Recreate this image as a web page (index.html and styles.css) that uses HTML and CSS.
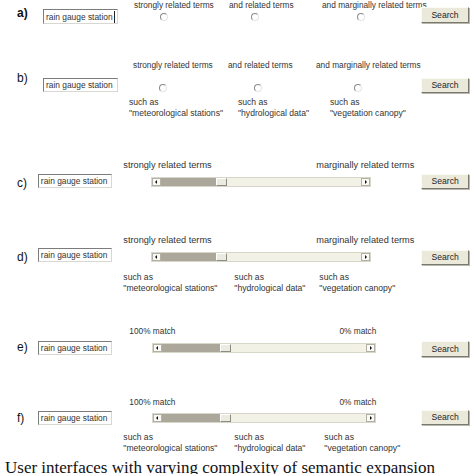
FILE: index.html
```html
<!DOCTYPE html>
<html>
<head>
<meta charset="utf-8">
<link rel="stylesheet" href="styles.css">
</head>
<body>
<div class="page">

  <section class="row ra">
    <div class="lbl lbl-ab bold">a)</div>
    <div class="inp inp-a"><span class="val">rain gauge station</span><span class="caret"></span></div>
    <div class="mid mid-ab mid-a">
      <div class="g3 heads-a">
        <div class="head">strongly related terms</div>
        <div class="head">and related terms</div>
        <div class="head">and marginally related terms</div>
      </div>
      <div class="g3 heads-a radios-a">
        <span class="radio ra1"></span>
        <span class="radio ra2"></span>
        <span class="radio ra3"></span>
      </div>
    </div>
    <button class="btn btn-a">Search</button>
  </section>

  <section class="row rb">
    <div class="lbl lbl-ab">b)</div>
    <div class="inp inp-b"><span class="val">rain gauge station</span></div>
    <div class="mid mid-ab mid-b">
      <div class="g3 heads-b">
        <div class="head">strongly related terms</div>
        <div class="head">and related terms</div>
        <div class="head">and marginally related terms</div>
      </div>
      <div class="g3 heads-b radios-b">
        <span class="radio rb1"></span>
        <span class="radio rb2"></span>
        <span class="radio rb3"></span>
      </div>
      <div class="g3 such such-b">
        <div>such as<br>"meteorological stations"</div>
        <div>such as<br>"hydrological data"</div>
        <div>such as<br>"vegetation canopy"</div>
      </div>
    </div>
    <button class="btn btn-b">Search</button>
  </section>

  <section class="row rc">
    <div class="lbl lbl-cf">c)</div>
    <div class="inp inp-c"><span class="val">rain gauge station</span></div>
    <div class="mid mid-cf">
      <div class="hrow hrow-cd">
        <span>strongly related terms</span>
        <span>marginally related terms</span>
      </div>
      <div class="slider slider-cd">
        <span class="arrow left"></span>
        <span class="fill fill-cd"></span>
        <span class="thumb"></span>
        <span class="track"></span>
        <span class="arrow right"></span>
      </div>
    </div>
    <button class="btn btn-c">Search</button>
  </section>

  <section class="row rd">
    <div class="lbl lbl-cf">d)</div>
    <div class="inp inp-d"><span class="val">rain gauge station</span></div>
    <div class="mid mid-cf">
      <div class="hrow hrow-cd">
        <span>strongly related terms</span>
        <span>marginally related terms</span>
      </div>
      <div class="slider slider-cd">
        <span class="arrow left"></span>
        <span class="fill fill-cd"></span>
        <span class="thumb"></span>
        <span class="track"></span>
        <span class="arrow right"></span>
      </div>
      <div class="g3 such such-d">
        <div>such as<br>"meteorological stations"</div>
        <div>such as<br>"hydrological data"</div>
        <div>such as<br>"vegetation canopy"</div>
      </div>
    </div>
    <button class="btn btn-d">Search</button>
  </section>

  <section class="row re">
    <div class="lbl lbl-cf">e)</div>
    <div class="inp inp-e"><span class="val">rain gauge station</span></div>
    <div class="mid mid-cf">
      <div class="hrow hrow-ef hrow-e">
        <span>100% match</span>
        <span>0% match</span>
      </div>
      <div class="slider slider-ef">
        <span class="arrow left"></span>
        <span class="fill fill-ef"></span>
        <span class="thumb"></span>
        <span class="track"></span>
        <span class="arrow right"></span>
      </div>
    </div>
    <button class="btn btn-e">Search</button>
  </section>

  <section class="row rf">
    <div class="lbl lbl-cf">f)</div>
    <div class="inp inp-f"><span class="val">rain gauge station</span></div>
    <div class="mid mid-cf">
      <div class="hrow hrow-ef hrow-f">
        <span>100% match</span>
        <span>0% match</span>
      </div>
      <div class="slider slider-ef slider-f">
        <span class="arrow left"></span>
        <span class="fill fill-ef"></span>
        <span class="thumb"></span>
        <span class="track"></span>
        <span class="arrow right"></span>
      </div>
      <div class="g3 such such-f">
        <div>such as<br>"meteorological stations"</div>
        <div>such as<br>"hydrological data"</div>
        <div>such as<br>"vegetation canopy"</div>
      </div>
    </div>
    <button class="btn btn-f">Search</button>
  </section>

  <p class="caption">User interfaces with varying complexity of semantic expansion</p>
</div>
</body>
</html>
```

FILE: styles.css
```css
html, body {
  margin: 0;
  padding: 0;
  background: #ffffff;
}
body {
  width: 474px;
  height: 474px;
  overflow: hidden;
  font-family: "Liberation Sans", Arial, sans-serif;
  color: #2e2e2e;
}
.page {
  width: 474px;
}
.row {
  display: flex;
  align-items: flex-start;
  white-space: nowrap;
}
.ra { height: 60px; }
.rb { height: 90px; }
.rc { height: 75px; }
.rd { height: 95px; }
.re { height: 65px; }
.rf { height: 67px; }

/* labels */
.lbl {
  box-sizing: border-box;
  padding-left: 17px;
  font-size: 12px;
  line-height: 12px;
  color: #111;
}
.bold { font-weight: 700; }
.lbl-ab { width: 43px; }
.lbl-cf { width: 38px; }
.ra .lbl { margin-top: 7px; }
.rb .lbl { margin-top: 12px; }
.rc .lbl { margin-top: 27px; }
.rd .lbl { margin-top: 26px; }
.re .lbl { margin-top: 21px; }
.rf .lbl { margin-top: 27px; }

/* text inputs */
.inp {
  box-sizing: border-box;
  width: 75px;
  height: 14px;
  display: flex;
  align-items: center;
  padding-left: 2px;
  background: #fff;
  border: 1px solid;
  border-color: #7c7c7c #d9d8d0 #d9d8d0 #7c7c7c;
  font-size: 8.4px;
  color: #333;
  overflow: hidden;
}
.inp-a { height: 15px; margin-top: 9px; }
.inp-b { margin-top: 18px; }
.inp-c { margin-top: 24px; }
.inp-d { margin-top: 23px; }
.inp-e { margin-top: 21px; }
.inp-f { margin-top: 26px; }
.caret {
  display: inline-block;
  width: 1px;
  height: 12px;
  margin-left: 1px;
  background: #222;
}

/* middle areas */
.mid { flex: 0 0 auto; }
.mid-a { margin-left: 16px; width: 287px; }
.mid-b { margin-left: 15px; width: 288px; }
.mid-cf { width: 309px; }

.g3 { display: grid; }
.heads-a { grid-template-columns: 95px 93px auto; }
.heads-b { grid-template-columns: 95px 88px auto; }
.head {
  font-size: 8.3px;
  line-height: 10px;
  color: #333;
}
.radio {
  display: block;
  box-sizing: border-box;
  width: 8px;
  height: 8px;
  border-radius: 50%;
  border: 1px solid;
  border-color: #8a8a8a #e4e4e4 #e4e4e4 #8a8a8a;
}
.radios-a { margin-top: 3px; }
.ra1 { margin-left: 26px; }
.ra2 { margin-left: 22px; }
.ra3 { margin-left: 35px; }
.radios-b { margin-top: 14px; }
.rb1 { margin-left: 26px; }
.rb2 { margin-left: 26px; }
.rb3 { margin-left: 38px; }

.such {
  font-size: 8.6px;
  line-height: 11px;
  color: #333;
}
.such-b {
  margin-top: 5px;
  margin-left: -4px;
  grid-template-columns: 109px 92px auto;
}
.such-d {
  margin-top: 10px;
  margin-left: 11px;
  grid-template-columns: 111px 85px auto;
}
.such-f {
  margin-top: 9px;
  margin-left: 11px;
  grid-template-columns: 111px 90px auto;
}

/* heading rows above sliders */
.hrow {
  display: flex;
  justify-content: space-between;
  font-size: 9.2px;
  line-height: 11px;
  color: #333;
}
.hrow-cd {
  margin-top: 10px;
  padding-left: 11px;
  padding-right: 7px;
}
.hrow-ef {
  font-size: 8.3px;
  padding-left: 17px;
  padding-right: 45px;
}
.hrow-e { margin-top: 6px; }
.hrow-f { margin-top: 12px; }

/* sliders */
.slider {
  display: flex;
  box-sizing: border-box;
  height: 10px;
  background: #f2f1e5;
  border: 1px solid #d8d6c8;
}
.slider-cd {
  margin-top: 6px;
  margin-left: 39px;
  width: 220px;
}
.slider-ef {
  margin-top: 6px;
  margin-left: 40px;
  width: 224px;
}
.slider-f { margin-top: 5px; }
.arrow {
  position: relative;
  flex: 0 0 auto;
  box-sizing: border-box;
  width: 9px;
  height: 8px;
  background: #f9f9f5;
  border: 1px solid #b3b1a5;
}
.arrow::after {
  content: "";
  position: absolute;
  top: 1px;
  width: 0;
  height: 0;
  border-top: 2px solid transparent;
  border-bottom: 2px solid transparent;
}
.arrow.left::after {
  left: 2px;
  border-right: 2px solid #111;
}
.arrow.right::after {
  left: 3px;
  border-left: 2px solid #111;
}
.fill {
  flex: 0 0 auto;
  height: 8px;
  background: #aba89b;
}
.fill-cd { width: 55px; }
.fill-ef { width: 58px; }
.thumb {
  flex: 0 0 auto;
  box-sizing: border-box;
  width: 11px;
  height: 8px;
  background: #ecebe2;
  border: 1px solid;
  border-color: #ffffff #8d8c83 #8d8c83 #ffffff;
}
.track { flex: 1 1 auto; }

/* buttons */
.btn {
  box-sizing: border-box;
  margin: 0 5px 0 auto;
  padding: 0;
  width: 48px;
  height: 15px;
  background: #ebe9da;
  border: 1px solid;
  border-color: #fbfbf6 #7a7970 #7a7970 #fbfbf6;
  box-shadow: 1px 1px 0 #b8b7ae;
  font-family: "Liberation Sans", Arial, sans-serif;
  font-size: 8.6px;
  line-height: 13px;
  color: #1e1e1e;
}
.btn-a { margin-top: 7px; height: 16px; }
.btn-b { margin-top: 18px; }
.btn-c { margin-top: 24px; }
.btn-d { margin-top: 25px; }
.btn-e { margin-top: 21px; height: 16px; }
.btn-f { margin-top: 25px; }

/* caption */
.caption {
  margin: 0;
  padding: 6px 0 0 5px;
  font-family: "Liberation Serif", "Times New Roman", serif;
  font-size: 17px;
  line-height: 20px;
  color: #111;
  white-space: nowrap;
}
```
